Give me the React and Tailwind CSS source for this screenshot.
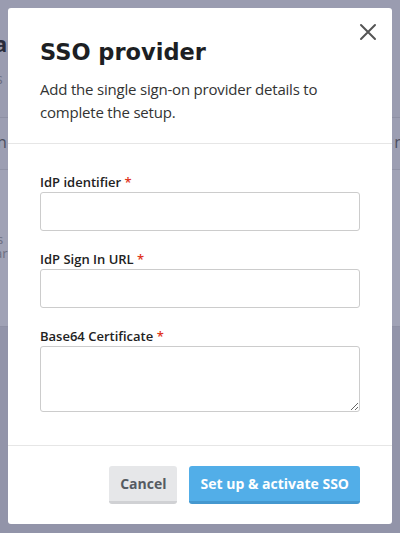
import React from "react";

const font = { fontFamily: '"Open Sans", "Noto Sans", sans-serif' };
const titleFont = { fontFamily: '"DejaVu Sans", "Noto Sans", sans-serif' };

function Field({ label, children }) {
  return (
    <div className="flex flex-col">
      <label className="text-[13px] font-semibold text-[#222] leading-[16px] mb-[2px]">
        {label} <span className="text-[#e0341d]">*</span>
      </label>
      {children}
    </div>
  );
}

export default function App() {
  return (
    <div className="relative w-[400px] h-[533px] overflow-hidden bg-[#9294a9]" style={font}>
      {/* background page under overlay */}
      <div className="flex flex-col">
        <div className="h-[118px] bg-[#9a9cb0] pt-[32px] border-b border-[#8e90a4]">
          <div className="text-[22px] font-bold text-[#2a2c3c] ml-[-6px] leading-[22px]">al</div>
          <div className="text-[14px] text-[#6c6e80] ml-[-4px] mt-[14px]">s</div>
        </div>
        <div className="h-[52px] bg-[#9c9eb2] border-b border-[#9092a6] pt-[12px] flex justify-between">
          <span className="text-[16px] text-[#4c4e60] ml-[-3px]">n</span>
          <span className="text-[16px] text-[#4c4e60] mr-[-4px]">n</span>
        </div>
        <div className="h-[157px] bg-[#a0a2b5] pt-[62px] border-b border-[#8e90a4]">
          <div className="text-[13px] text-[#6c6e80] ml-[-3px] leading-[14px]">s</div>
          <div className="text-[13px] text-[#6c6e80] ml-[-5px] leading-[14px]">ar</div>
        </div>
      </div>

      {/* modal */}
      <div className="absolute left-[8px] top-[8px] w-[384px] h-[516px] bg-white rounded-[3px] flex flex-col">
        <button className="absolute right-[13px] top-[13px] w-[22px] h-[22px] flex items-center justify-center text-[#555]">
          <svg width="18" height="18" viewBox="0 0 18 18" fill="none" stroke="currentColor" strokeWidth="2" strokeLinecap="round">
            <path d="M2 2L16 16M16 2L2 16" />
          </svg>
        </button>
        <div className="px-[32px] pt-[29px] pb-[19px] border-b border-[#e6e6e6]">
          <h2 className="text-[22.5px] font-bold text-[#1d1f23] leading-[30px]" style={titleFont}>SSO provider</h2>
          <p className="mt-[11px] text-[15px] text-[#333] leading-[23px] tracking-[-0.2px]">
            Add the single sign-on provider details to complete the setup.
          </p>
        </div>
        <div className="px-[32px] pt-[30px] pb-[33px] flex flex-col gap-[20px] border-b border-[#e6e6e6]">
          <Field label="IdP identifier">
            <input className="h-[39px] w-full border border-[#ccc] rounded-[3px]" />
          </Field>
          <Field label="IdP Sign In URL">
            <input className="h-[39px] w-full border border-[#ccc] rounded-[3px]" />
          </Field>
          <Field label="Base64 Certificate">
            <textarea className="h-[66px] w-full border border-[#ccc] rounded-[3px] block" />
          </Field>
        </div>
        <div className="flex justify-end gap-[12px] px-[32px] pt-[20px]">
          <button className="h-[38px] px-[11px] bg-[#e6e7e9] border-b-[3px] border-[#d0d1d4] rounded-[3px] text-[14px] font-bold text-[#555b62]">
            Cancel
          </button>
          <button className="h-[38px] px-[11px] bg-[#52aee8] border-b-[3px] border-[#4598cf] rounded-[3px] text-[14px] font-bold text-white">
            Set up &amp; activate SSO
          </button>
        </div>
      </div>
    </div>
  );
}
